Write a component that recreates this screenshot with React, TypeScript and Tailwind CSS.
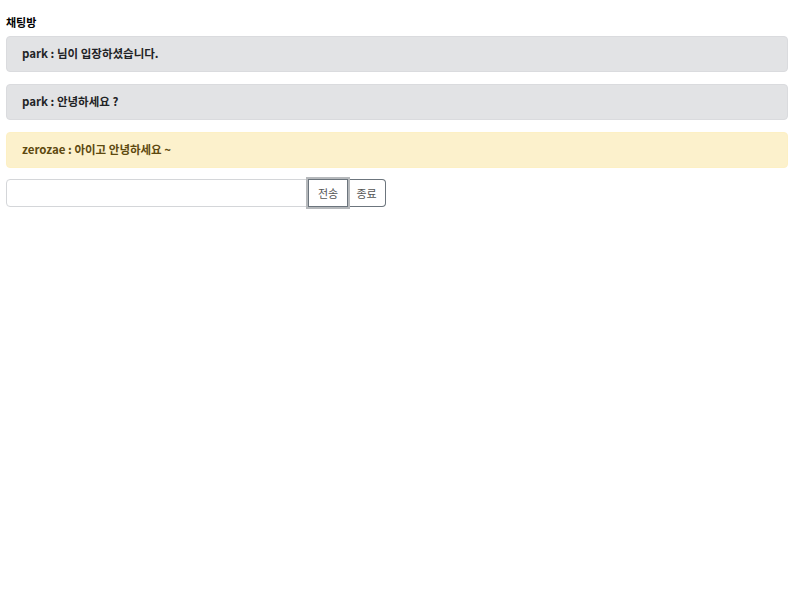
const messages = [
  { id: 1, text: 'park : 님이 입장하셨습니다.', mine: false },
  { id: 2, text: 'park : 안녕하세요 ?', mine: false },
  { id: 3, text: 'zerozae : 아이고 안녕하세요 ~', mine: true },
];

export default function App() {
  return (
    <div className="min-h-screen bg-white pl-[6px] pr-[12px] pt-[15px] font-['Noto_Sans_CJK_KR','Noto_Sans',sans-serif]">
      <h3 className="text-[11px] font-bold text-black leading-[14px] mb-[7px]">채팅방</h3>

      {/* Messages */}
      <div className="flex flex-col gap-[12px] mb-[11px]">
        {messages.map((m) => (
          <div
            key={m.id}
            className={
              m.mine
                ? 'h-[36px] flex items-center rounded-[4px] border border-[#fdf0c4] bg-[#fcf1cc] px-[15px] text-[11.5px] font-bold text-[#5e4a10]'
                : 'h-[36px] flex items-center rounded-[4px] border border-[#dadbde] bg-[#e2e3e5] px-[15px] text-[11.5px] font-bold text-[#1f2326]'
            }
          >
            {m.text}
          </div>
        ))}
      </div>

      {/* Input row */}
      <div className="flex items-center">
        <input
          type="text"
          className="w-[302px] h-[28px] rounded-l-[4px] border border-[#d4d6d9] px-2 text-[12px] outline-none"
        />
        <button className="h-[28px] w-[40px] border border-[#6c757d] text-[11px] text-[#555] ring-2 ring-[#b5b8bb] relative z-10">
          전송
        </button>
        <button className="h-[28px] w-[38px] rounded-r-[4px] border border-l-0 border-[#6c757d] text-[11px] text-[#555]">
          종료
        </button>
      </div>
    </div>
  );
}
